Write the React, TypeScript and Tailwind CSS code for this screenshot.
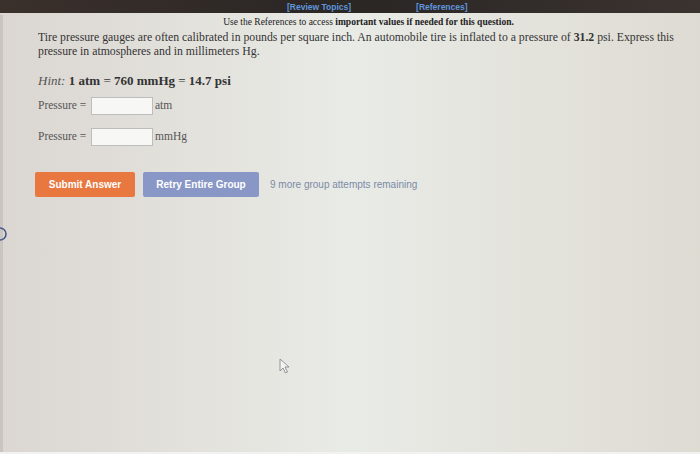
export default function App() {
  const serif = { fontFamily: '"Liberation Serif", "Times New Roman", serif' };
  const sans = { fontFamily: '"Liberation Sans", Arial, sans-serif' };

  return (
    <div className="relative w-[700px] h-[454px] overflow-hidden bg-gradient-to-r from-[#dbd6d1] via-[#e9ebe6] to-[#dedbd3]">
      {/* dark strip at the top of the monitor */}
      <div
        className="h-[13px] bg-gradient-to-r from-[#3a302c] via-[#2a2624] to-[#3b3330] flex items-end text-[8.5px] font-bold text-[#5f95dc]"
        style={sans}
      >
        <span className="ml-[287px] leading-[11px]">[Review Topics]</span>
        <span className="ml-[65px] leading-[11px]">[References]</span>
      </div>

      <div className="border-l-[3px] border-[#c9c5c1] h-[441px]">
        <p className="text-center text-[9.5px] leading-[14px] text-[#222] mt-[2px] pl-[34px]" style={serif}>
          Use the References to access <b>important values if needed for this question.</b>
        </p>

        <div className="pl-[35px] pr-[10px] text-[#333]" style={serif}>
          <p className="text-[11.75px] leading-[14px] mt-[2px]">
            Tire pressure gauges are often calibrated in pounds per square inch. An automobile tire is
            inflated to a pressure of <b>31.2</b> psi. Express this
            <br />
            pressure in atmospheres and in millimeters Hg.
          </p>

          <p className="mt-[14px] text-[13px] leading-[16px]">
            <i className="text-[#555]">Hint:</i> <b>1 atm</b> = <b>760 mmHg</b> = <b>14.7 psi</b>
          </p>

          <div className="mt-[8px] flex flex-col gap-[13px] text-[11.5px] text-[#555]">
            <div className="flex items-center">
              <span className="w-[53px]">Pressure =</span>
              <div className="w-[62px] h-[18px] bg-[#f7f7f5] border border-[#bdbdbd]" />
              <span className="ml-[2px]">atm</span>
            </div>
            <div className="flex items-center">
              <span className="w-[53px]">Pressure =</span>
              <div className="w-[62px] h-[18px] bg-[#f7f7f5] border border-[#bdbdbd]" />
              <span className="ml-[2px]">mmHg</span>
            </div>
          </div>

          <div className="mt-[26px] flex items-center" style={sans}>
            <div className="w-[100px] h-[25px] -ml-[3px] rounded-[2px] bg-[#e8783f] text-white text-[10px] font-bold flex items-center justify-center">
              Submit Answer
            </div>
            <div className="w-[116px] h-[25px] ml-[8px] rounded-[2px] bg-[#8997c6] text-white text-[10px] font-bold flex items-center justify-center">
              Retry Entire Group
            </div>
            <span className="ml-[11px] text-[10px] text-[#7c8aa6]">9 more group attempts remaining</span>
          </div>
        </div>
      </div>

      {/* reflection artifacts */}
      <svg className="absolute left-[-8px] top-[226px]" width="16" height="16" viewBox="0 0 16 16">
        <circle cx="8" cy="8" r="6" fill="none" stroke="#4a5a8a" strokeWidth="1.6" />
      </svg>

      <svg className="absolute left-[279px] top-[358px]" width="12" height="16" viewBox="0 0 12 16">
        <path d="M1 1 L1 13 L4 10 L6.5 15 L8.5 14 L6 9 L10 9 Z" fill="#f3f3f3" stroke="#8a8a8a" strokeWidth="0.9" />
      </svg>

      <div className="absolute left-0 right-0 bottom-0 h-[2px] bg-[#f2f2f0]" />
    </div>
  );
}
